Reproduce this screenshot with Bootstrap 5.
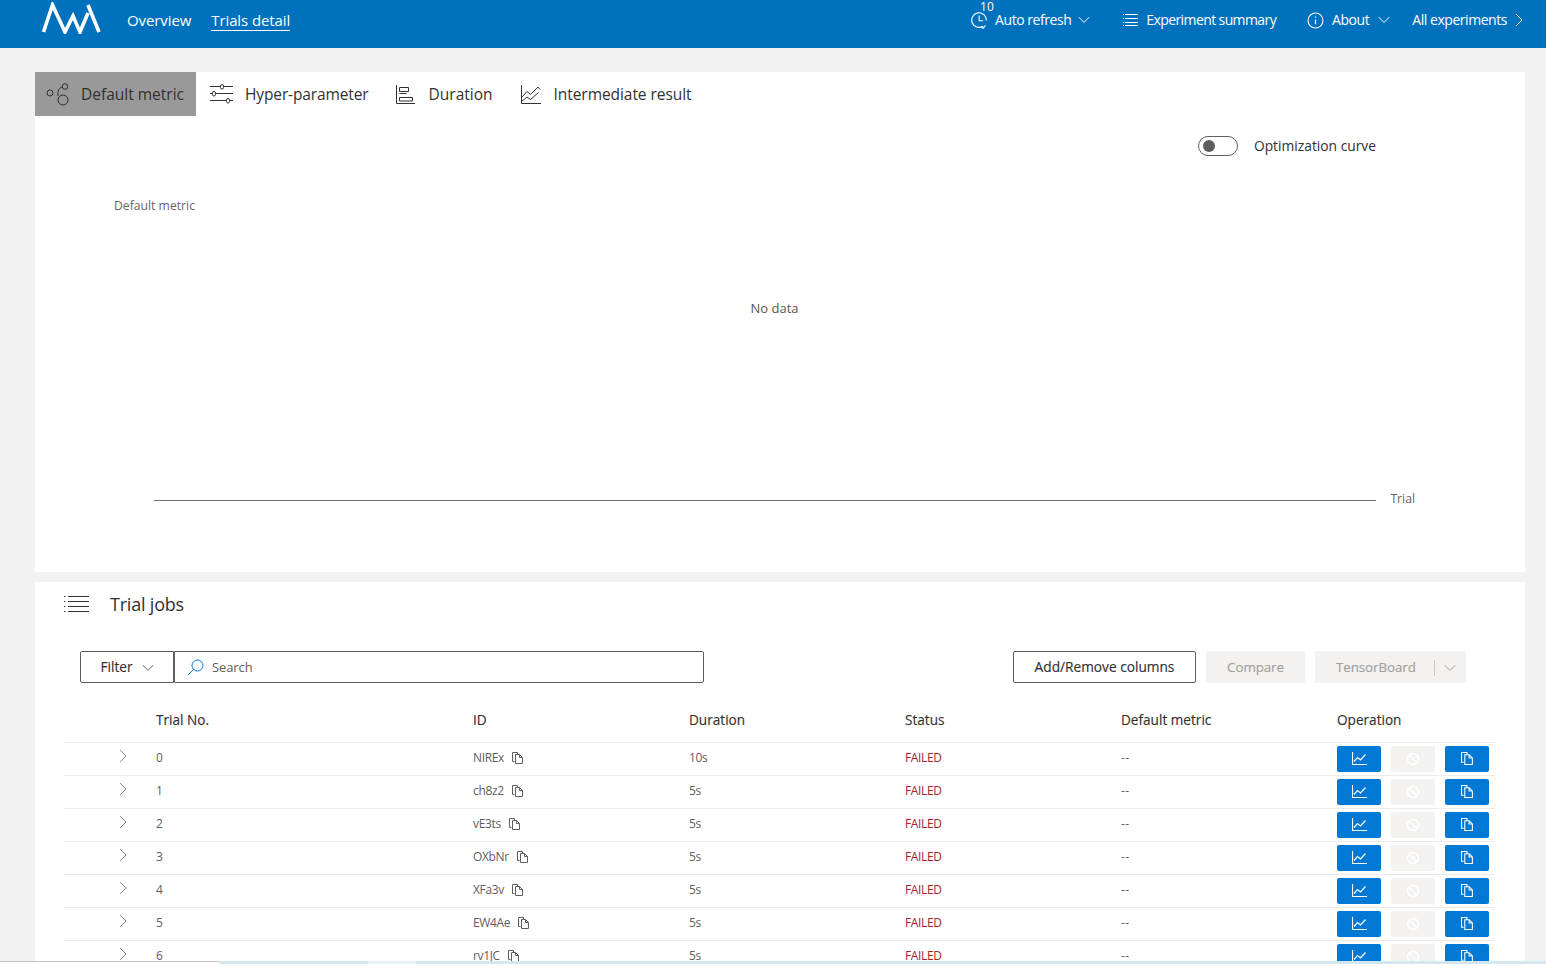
<!DOCTYPE html>
<html lang="en">
<head>
<meta charset="utf-8">
<title>Trials detail</title>
<link href="https://cdn.jsdelivr.net/npm/bootstrap@5.3.0/dist/css/bootstrap.min.css" rel="stylesheet">
<style>
html,body{height:964px;overflow:hidden}
body{background:#f2f2f2;font-family:"Open Sans","Noto Sans",sans-serif;font-size:14px;color:#323130;position:relative}
svg{display:block;flex:none}
.nni-head{height:48px;background:#0071bc;color:#fff;padding:0 23px 0 41px}
.nni-logo{margin-right:26px;margin-top:-12px}
.nni-link{font-size:15px;letter-spacing:-.1px;color:#fff;line-height:20px;margin-top:-9px}
.nni-link.on{border-bottom:1px solid #fff;line-height:19px;margin-top:-6px;margin-left:20px}
.nni-right{margin-top:-8px;letter-spacing:-.45px;font-size:14px;line-height:20px}
.nni-clock{position:relative;margin-right:7px}
.nni-ten{position:absolute;left:9px;top:-11px;font-size:12px;letter-spacing:0;line-height:14px}
.nni-ar-chev{margin-left:7px}
.nni-summary-icon{margin-left:33px}
.nni-summary{margin-left:8px;letter-spacing:-.6px}
.nni-about-icon{margin-left:31px}
.nni-about{margin-left:8px}
.nni-about-chev{margin-left:9px}
.nni-all{margin-left:22px}
.nni-panel{background:#fff;margin:0 21px 0 35px}
.nni-top{margin-top:24px;height:500px;display:flex;flex-direction:column}
.nni-tabs{height:44px}
.nni-tab{height:44px;font-size:15.5px;color:#323130}
.nni-tab span{padding-top:2px}
.nni-tab.on{background:#999;padding:0 12px 0 11px;gap:12px}
.nni-tab-hyper{padding:0 13px 0 14px;gap:12px;letter-spacing:-.12px}
.nni-tab-dur{padding:0 14px;gap:14px}
.nni-tab-int{padding:0 14px;gap:13px;letter-spacing:-.06px}
.nni-opt{margin:20px 149px 0 0;gap:16px;font-size:13.8px;height:20px}
.nni-switch{width:40px;height:20px;border:1px solid #605e5c;border-radius:10px;padding:0 4px}
.nni-knob{width:12px;height:12px;border-radius:50%;background:#605e5c}
.nni-chart{flex:1;padding:0 0 0 79px;font-size:12.2px;color:#666}
.nni-axname{margin-top:42px;line-height:16px}
.nni-nodata{text-align:center;margin:85px 0 0 -90px;font-size:13px;color:#555;line-height:18px}
.nni-axis{margin:174px 110px 0 40px;gap:14px;line-height:16px}
.nni-axline{flex:1;height:1px;background:#6e7079;margin-top:9px}
.nni-jobs{margin-top:10px;height:390px;padding-left:29px}
.nni-title{height:44px;gap:21px;font-size:18px;letter-spacing:-.2px}
.nni-tools{margin:25px 59px 0 16px;height:32px;font-size:13.7px;-webkit-text-stroke:.15px}
.nni-filter{width:94px;height:32px;border:1px solid #605e5c;border-radius:2px 0 0 2px;gap:9px;background:#fff;padding:1px 0 0;font:inherit;color:#323130}
.nni-search{width:530px;height:32px;border:1px solid #605e5c;border-radius:0 2px 2px 0;padding:1px 8px 0 12px;gap:8px;font-size:13px;letter-spacing:-.1px;color:#605e5c;-webkit-text-stroke:0}
.nni-add{width:183px;height:32px;border:1px solid #605e5c;border-radius:2px;background:#fff;padding:1px 0 0;font:inherit;color:#323130}
.nni-off{height:32px;background:#f3f2f1;border-radius:2px;color:#a19f9d;padding-top:1px;font-size:13.4px;letter-spacing:-.1px}
.nni-compare{width:99px;margin-left:10px}
.nni-tb{width:151px;margin-left:10px;padding-left:21px}
.nni-sep{width:1px;height:16px;background:#c8c6c4;margin:0 9px 0 18px}
.nni-grid{display:grid;grid-template-columns:92px 317px 216px 216px 216px 216px 158px;margin-right:30px;align-items:center}
.nni-thead{margin-top:21px;height:39px;font-size:13.6px;-webkit-text-stroke:.15px;border-bottom:1px solid #edebe9;padding-bottom:5px}
.nni-row{height:33px;font-size:12px;letter-spacing:-.35px;color:#605e5c;border-bottom:1px solid #edebe9;padding-bottom:2px}
.nni-exp{padding-left:55px;margin-top:-4px}
.nni-failed{color:#a4262c}
.nni-dash{letter-spacing:.4px}
.nni-cellid{gap:8px}
.nni-ops{gap:10px;padding-top:1px}
.nni-op{width:44px;height:26px;border-radius:2px;background:#0078d4;padding:0;border:0}
.nni-op.dis{background:#f3f2f1}
.nni-bottom{position:absolute;left:0;right:0;bottom:0;height:3px;background:#d3e7f0;display:flex}
.nni-b1{width:219px;background:#fff;border-top:1px solid #c4c4c4}
.nni-b2{width:149px}
.nni-b3{width:48px;background:#e6f2f6}
</style>
</head>
<body>
<svg width="0" height="0" class="position-absolute">
<defs>
<symbol id="i-copy" viewBox="0 0 12 12"><path d="M2.500 9.500H.5V.5h5v2M3.500 2.500h4l3 3v6h-7zM7.500 2.500v3h3" fill="none" stroke="currentColor" stroke-width="1"/></symbol>
<symbol id="i-chart" viewBox="0 0 15 13"><path d="M.5 0v12.500h14.500M2 9.500 5.500 5.500l3 2.500 5-5.500" fill="none" stroke="currentColor" stroke-width="1.200"/></symbol>
<symbol id="i-chev" viewBox="0 0 12 12"><path d="M.8 3.200 6 8.400 11.200 3.200" fill="none" stroke="currentColor" stroke-width="1"/></symbol>
<symbol id="i-right" viewBox="0 0 8 14"><path d="M1 1l6 6-6 6" fill="none" stroke="currentColor" stroke-width="1"/></symbol>
<symbol id="i-list" viewBox="0 0 25 16"><path d="M4 .5h21M4 5.500h21M4 10.500h21M4 15.500h21" fill="none" stroke="currentColor" stroke-width="1"/><path d="M0 .5h2M0 5.500h2M0 10.500h2M0 15.500h2" fill="none" stroke="currentColor" stroke-width="1" stroke-dasharray="1 .6"/></symbol>
<symbol id="i-list-sm" viewBox="0 0 15 12"><path d="M2 .5h13M2 4.500h13M2 8.500h13M2 11.500h13" fill="none" stroke="currentColor" stroke-width="1"/><path d="M0 .5h1M0 4.500h1M0 8.500h1M0 11.500h1" fill="none" stroke="currentColor" stroke-width="1"/></symbol>
</defs>
</svg>

<header class="nni-head d-flex align-items-center">
  <svg class="nni-logo" width="60" height="32" viewBox="0 0 60 32" aria-label="NNI"><path d="M2.500 30 11.500 3 24 30 32 14 39 30 47 11M47 3 58 30" fill="none" stroke="#fff" stroke-width="3.600" stroke-linejoin="miter"/></svg>
  <span class="nni-link">Overview</span>
  <span class="nni-link on">Trials detail</span>
  <div class="ms-auto d-flex align-items-center nni-right">
    <span class="nni-clock"><span class="nni-ten">10</span>
      <svg width="17" height="18" viewBox="0 0 17 18"><path d="M12 15.200A7.300 7.300 0 1 1 15.300 9.500M8.200 4.500v5.200h4M10 15.500l2 1.800 2.500-3" fill="none" stroke="#fff" stroke-width="1.100"/></svg></span>
    <span>Auto refresh</span>
    <svg class="nni-ar-chev" width="12" height="12" color="#fff"><use href="#i-chev"/></svg>
    <svg class="nni-summary-icon" width="15" height="12" color="#fff"><use href="#i-list-sm"/></svg>
    <span class="nni-summary">Experiment summary</span>
    <svg class="nni-about-icon" width="17" height="17" viewBox="0 0 16 16"><circle cx="8" cy="8" r="7" fill="none" stroke="#fff"/><path d="M8 7v4.500M8 4.200v1.300" stroke="#fff" stroke-width="1.200"/></svg>
    <span class="nni-about">About</span>
    <svg class="nni-about-chev" width="12" height="12" color="#fff"><use href="#i-chev"/></svg>
    <span class="nni-all">All experiments</span>
    <svg class="ms-2" width="8" height="14" color="#fff"><use href="#i-right"/></svg>
  </div>
</header>

<section class="nni-panel nni-top">
  <div class="nni-tabs d-flex">
    <div class="nni-tab on d-flex align-items-center">
      <svg width="23" height="23" viewBox="0 0 23 23"><g fill="none" stroke="#323130"><circle cx="4" cy="10" r="3"/><circle cx="19" cy="3.500" r="2.800"/><circle cx="17" cy="17" r="5"/><path d="M16.500 3.500Q11 5.500 12 13"/></g></svg>
      <span>Default metric</span>
    </div>
    <div class="nni-tab nni-tab-hyper d-flex align-items-center">
      <svg width="23" height="20" viewBox="0 0 23 20"><g fill="none" stroke="#323130"><path d="M0 2.500h10.500M13.500 2.500H23M0 9.500h2.500M5.500 9.500H23M0 16.500h16.500M19.500 16.500H23"/><rect x="10.500" y=".5" width="3" height="4.500" rx="1.500"/><rect x="2.500" y="7.500" width="3" height="4.500" rx="1.500"/><rect x="16.500" y="14.500" width="3" height="4.500" rx="1.500"/></g></svg>
      <span>Hyper-parameter</span>
    </div>
    <div class="nni-tab nni-tab-dur d-flex align-items-center">
      <svg width="19" height="19" viewBox="0 0 19 19"><path d="M.5 0v18.500h18.500M3.500 2.500h9v4h-9zM3.500 8.500h7M3.500 12.500h13v3.500h-13z" fill="none" stroke="#323130"/></svg>
      <span>Duration</span>
    </div>
    <div class="nni-tab nni-tab-int d-flex align-items-center">
      <svg width="20" height="19" viewBox="0 0 20 19"><path d="M.5 0v18.500h19.500M1 12l5-5.500 3.500 3 7.500-7.500 2 2.500M1 16l5-4 3.500 2.500 8-7" fill="none" stroke="#323130"/></svg>
      <span>Intermediate result</span>
    </div>
  </div>
  <div class="nni-opt d-flex align-items-center justify-content-end">
    <div class="nni-switch d-flex align-items-center"><span class="nni-knob"></span></div>
    <span>Optimization curve</span>
  </div>
  <div class="nni-chart">
    <div class="nni-axname">Default metric</div>
    <div class="nni-nodata">No data</div>
    <div class="nni-axis d-flex align-items-start"><span class="nni-axline"></span><span>Trial</span></div>
  </div>
</section>

<section class="nni-panel nni-jobs">
  <div class="nni-title d-flex align-items-center">
    <svg width="25" height="16" color="#323130"><use href="#i-list"/></svg>
    <span>Trial jobs</span>
  </div>
  <div class="nni-tools d-flex">
    <button class="nni-filter d-flex align-items-center justify-content-center" type="button">Filter <svg width="12" height="12" color="#605e5c"><use href="#i-chev"/></svg></button>
    <div class="nni-search d-flex align-items-center">
      <svg width="17" height="17" viewBox="0 0 17 17"><circle cx="10.500" cy="6.500" r="5.500" fill="none" stroke="#0078d4"/><path d="M6.500 10.500 1 16" stroke="#0078d4" fill="none"/></svg>
      <span>Search</span>
    </div>
    <button class="nni-add ms-auto" type="button">Add/Remove columns</button>
    <div class="nni-off nni-compare d-flex align-items-center justify-content-center">Compare</div>
    <div class="nni-off nni-tb d-flex align-items-center">TensorBoard<span class="nni-sep"></span><svg width="12" height="12" color="#a19f9d"><use href="#i-chev"/></svg></div>
  </div>
  <div class="nni-grid nni-thead">
    <span></span><span>Trial No.</span><span>ID</span><span>Duration</span><span>Status</span><span>Default metric</span><span>Operation</span>
  </div>
  <div id="nni-rows"></div>
</section>

<div class="nni-bottom"><span class="nni-b1"></span><span class="nni-b2"></span><span class="nni-b3"></span></div>

<script>
var rows=[["0","NIREx","10s"],["1","ch8z2","5s"],["2","vE3ts","5s"],["3","OXbNr","5s"],["4","XFa3v","5s"],["5","EW4Ae","5s"],["6","rv1JC","5s"]];
document.getElementById("nni-rows").innerHTML=rows.map(function(r){
return '<div class="nni-grid nni-row">'+
'<span class="nni-exp"><svg width="8" height="14" color="#8a8886"><use href="#i-right"/></svg></span>'+
'<span>'+r[0]+'</span>'+
'<span class="d-flex align-items-center nni-cellid">'+r[1]+'<svg width="12" height="12" color="#605e5c"><use href="#i-copy"/></svg></span>'+
'<span>'+r[2]+'</span><span class="nni-failed">FAILED</span><span class="nni-dash">--</span>'+
'<span class="d-flex nni-ops">'+
'<button type="button" class="nni-op d-flex align-items-center justify-content-center" aria-label="Detail"><svg width="15" height="13" color="#fff"><use href="#i-chart"/></svg></button>'+
'<button type="button" class="nni-op dis d-flex align-items-center justify-content-center" aria-label="Kill"><svg width="14" height="14" viewBox="0 0 14 14"><circle cx="7" cy="7" r="5.500" fill="none" stroke="#fff" stroke-width="1.500"/><path d="M3 3l8 8" stroke="#fff" stroke-width="1.500"/></svg></button>'+
'<button type="button" class="nni-op d-flex align-items-center justify-content-center" aria-label="Copy"><svg width="13" height="13" color="#fff"><use href="#i-copy"/></svg></button>'+
'</span></div>';}).join("");
</script>
<script src="https://cdn.jsdelivr.net/npm/bootstrap@5.3.0/dist/js/bootstrap.bundle.min.js"></script>
</body>
</html>
